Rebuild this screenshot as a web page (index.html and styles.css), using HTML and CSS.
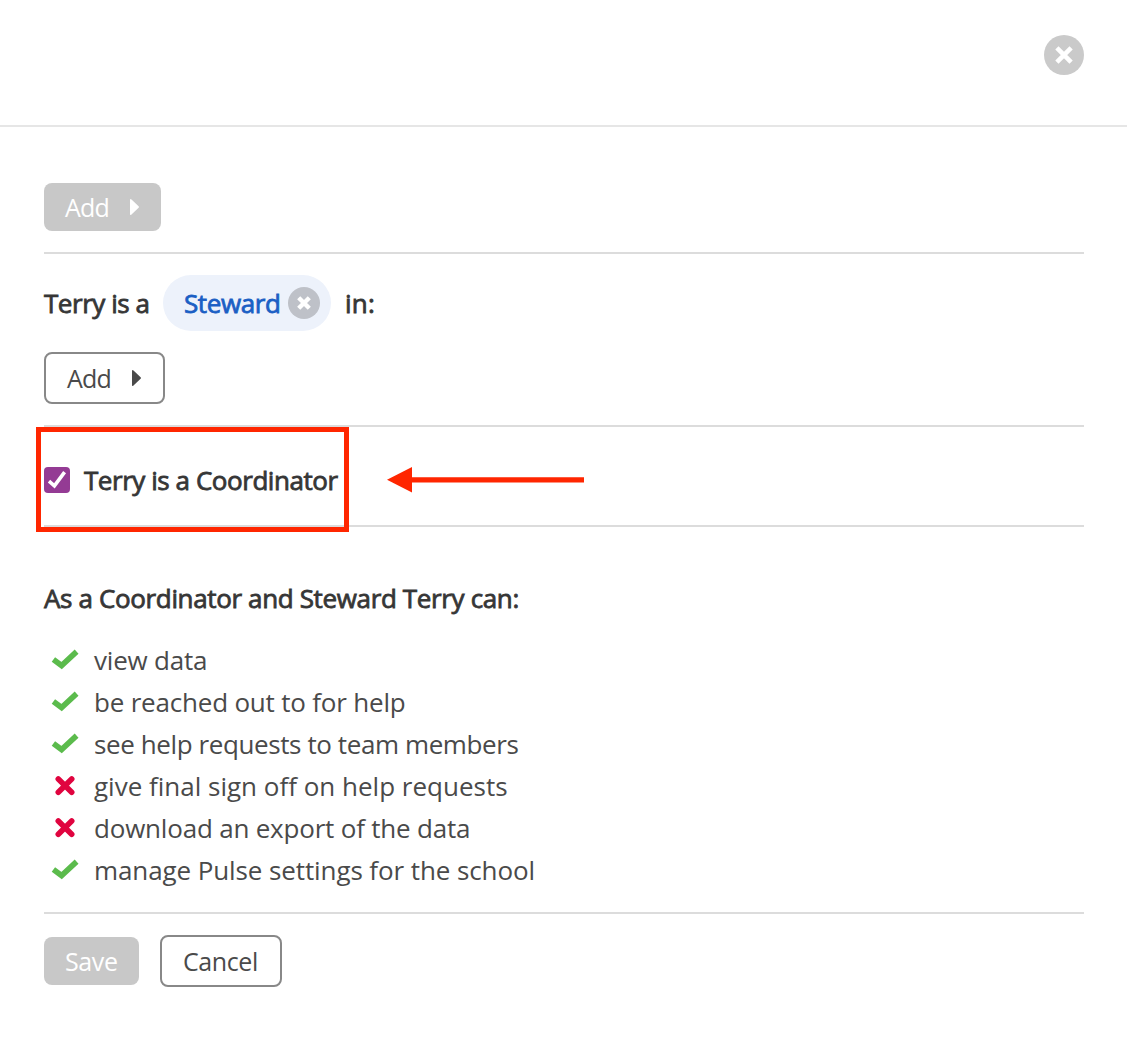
FILE: index.html
```
<!DOCTYPE html>
<html lang="en">
<head>
    <meta charset="UTF-8">
    <meta name="viewport" content="width=device-width, initial-scale=1.0">
    <title>Edit Roles</title>
    <link rel="stylesheet" href="styles.css">
</head>
<body>
    <header>
        <button class="close-btn" aria-label="Close">
            <svg width="40" height="40" viewBox="0 0 40 40"><path d="M12.9 12.9L27.1 27.1M27.1 12.9L12.9 27.1" stroke="#fff" stroke-width="4.6"/></svg>
        </button>
    </header>
    <main>
        <section class="team-section">
            <button class="btn btn-disabled" disabled><span class="add">Add</span><svg class="caret" width="10" height="18" viewBox="0 0 10 18"><path d="M0 2.2Q0 .2 1.5 1.6L8.6 8.2Q9.5 9 8.6 9.8L1.5 16.4Q0 17.8 0 15.8Z" fill="currentColor"/></svg></button>
        </section>
        <section class="steward-section">
            <div class="role-row">
                <span class="label label-name">Terry is a</span>
                <span class="chip">
                    <span class="chip-text">Steward</span>
                    <svg width="32" height="32" viewBox="0 0 32 32"><circle cx="16" cy="16" r="16" fill="#bec1c8"/><path d="M10.7 10.7L21.3 21.3M21.3 10.7L10.7 21.3" stroke="#fff" stroke-width="4.4"/></svg>
                </span>
                <span class="label label-in">in:</span>
            </div>
            <button class="btn btn-outline"><span class="add">Add</span><svg class="caret" width="10" height="18" viewBox="0 0 10 18"><path d="M0 2.2Q0 .2 1.5 1.6L8.6 8.2Q9.5 9 8.6 9.8L1.5 16.4Q0 17.8 0 15.8Z" fill="currentColor"/></svg></button>
        </section>
        <section class="coordinator-section">
            <label class="check-row">
                <svg width="26" height="26" viewBox="0 0 26 26"><rect width="26" height="26" rx="4" fill="#943b94"/><path d="M5 14.2L10.4 18.8L20.6 5.2" fill="none" stroke="#fff" stroke-width="3.6"/></svg>
                <span class="label">Terry is a Coordinator</span>
            </label>
            <div class="highlight"></div>
            <svg class="arrow" width="198" height="26" viewBox="0 0 198 26"><path d="M0 12.7L25 0V10.2H197V15.6H25V25.4Z" fill="#ff2600"/></svg>
        </section>
        <section class="permissions">
            <h2 class="label">As a Coordinator and Steward Terry can:</h2>
            <ul>
                <li><svg class="yes" viewBox="0 0 28 21"><path d="M2.4 10.4L10.6 16.6L25.6 2.6"/></svg><span>view data</span></li>
                <li><svg class="yes" viewBox="0 0 28 21"><path d="M2.4 10.4L10.6 16.6L25.6 2.6"/></svg><span>be reached out to for help</span></li>
                <li><svg class="yes" viewBox="0 0 28 21"><path d="M2.4 10.4L10.6 16.6L25.6 2.6"/></svg><span class="tight">see help requests to team members</span></li>
                <li><svg class="no" viewBox="0 0 28 21"><path d="M7.3 3.9L20.7 17.3M20.7 3.9L7.3 17.3"/></svg><span class="loose">give final sign off on help requests</span></li>
                <li><svg class="no" viewBox="0 0 28 21"><path d="M7.3 3.9L20.7 17.3M20.7 3.9L7.3 17.3"/></svg><span>download an export of the data</span></li>
                <li><svg class="yes" viewBox="0 0 28 21"><path d="M2.4 10.4L10.6 16.6L25.6 2.6"/></svg><span class="settings">manage Pulse settings for the school</span></li>
            </ul>
        </section>
        <footer>
            <button class="btn btn-disabled btn-save" disabled>Save</button>
            <button class="btn btn-outline btn-cancel">Cancel</button>
        </footer>
    </main>
</body>
</html>
```
FILE: styles.css
```
* {
    box-sizing: border-box;
}
body {
    margin: 0;
    background: #fff;
    color: #4a4a4a;
    font-family: 'Open Sans', 'Noto Sans', sans-serif;
    font-size: 26px;
}
header {
    display: flex;
    justify-content: flex-end;
    height: 127px;
    padding: 35px 43px 0 0;
    border-bottom: 2px solid #e6e6e6;
}
.close-btn {
    width: 40px;
    height: 40px;
    padding: 0;
    border: none;
    border-radius: 50%;
    background: #cacaca;
}
svg {
    display: block;
    flex: none;
}
main {
    padding: 0 43px 0 44px;
}
section {
    border-bottom: 2px solid #dcdcdc;
}
.btn {
    display: flex;
    align-items: center;
    font-family: inherit;
    font-size: 25px;
    line-height: 36px;
    letter-spacing: -0.4px;
    border-radius: 8px;
    white-space: nowrap;
}
.btn-disabled {
    width: 117px;
    height: 48px;
    padding: 0 21px;
    border: none;
    background: #c8c8c8;
    color: #fff;
}
.btn-outline {
    width: 121px;
    height: 52px;
    padding: 0 21px;
    border: 2px solid #888;
    background: #fff;
    color: #4a4a4a;
}
.add {
    letter-spacing: -0.8px;
}
.caret {
    margin: 0 0 0 auto;
}
.team-section {
    height: 127px;
    padding-top: 56px;
}
.steward-section {
    height: 173px;
    padding-top: 21px;
}
.role-row {
    display: flex;
    align-items: center;
    height: 56px;
    margin-bottom: 21px;
}
.label {
    margin: 0;
    color: #363636;
    font-size: 26px;
    font-weight: normal;
    line-height: 38px;
    letter-spacing: -0.45px;
    white-space: nowrap;
    -webkit-text-stroke: 0.8px currentColor;
}
h2.label {
    letter-spacing: -0.36px;
}
.label-name {
    width: 119px;
}
.label-in {
    letter-spacing: 0.3px;
}
.chip {
    display: flex;
    align-items: center;
    justify-content: space-between;
    width: 168px;
    height: 56px;
    margin-right: 14px;
    padding: 0 11px 0 21px;
    border-radius: 28px;
    background: #edf2fb;
    color: #1b5fc4;
}
.chip-text {
    line-height: 38px;
    letter-spacing: -0.4px;
    -webkit-text-stroke: 0.8px currentColor;
}
.coordinator-section {
    position: relative;
    height: 100px;
    padding-top: 34px;
}
.check-row {
    display: flex;
    align-items: center;
    gap: 14px;
}
.highlight {
    position: absolute;
    left: -8px;
    top: 0;
    width: 313px;
    height: 105px;
    border: 5px solid #ff2600;
}
.arrow {
    position: absolute;
    left: 343px;
    top: 40px;
}
.permissions {
    height: 387px;
    padding-top: 52px;
}
.permissions ul {
    margin: 22px 0 0;
    padding: 0;
    list-style: none;
}
.permissions li {
    display: flex;
    align-items: center;
    gap: 15px;
    height: 42px;
    padding-left: 7px;
    letter-spacing: -0.2px;
    white-space: nowrap;
}
.permissions .tight {
    letter-spacing: -0.4px;
}
.permissions .loose {
    letter-spacing: 0;
}
.permissions .settings {
    letter-spacing: -0.1px;
}
.permissions li svg {
    width: 28px;
    height: 21px;
    margin-top: -1px;
    overflow: visible;
    fill: none;
    stroke-width: 5.6;
}
.yes {
    stroke: #5bbb4c;
}
.no {
    stroke: #e0043f;
    stroke-linecap: round;
}
footer {
    display: flex;
    align-items: center;
    gap: 21px;
    padding-top: 21px;
}
.btn-save {
    width: 95px;
}
.btn-cancel {
    width: 122px;
}
```
